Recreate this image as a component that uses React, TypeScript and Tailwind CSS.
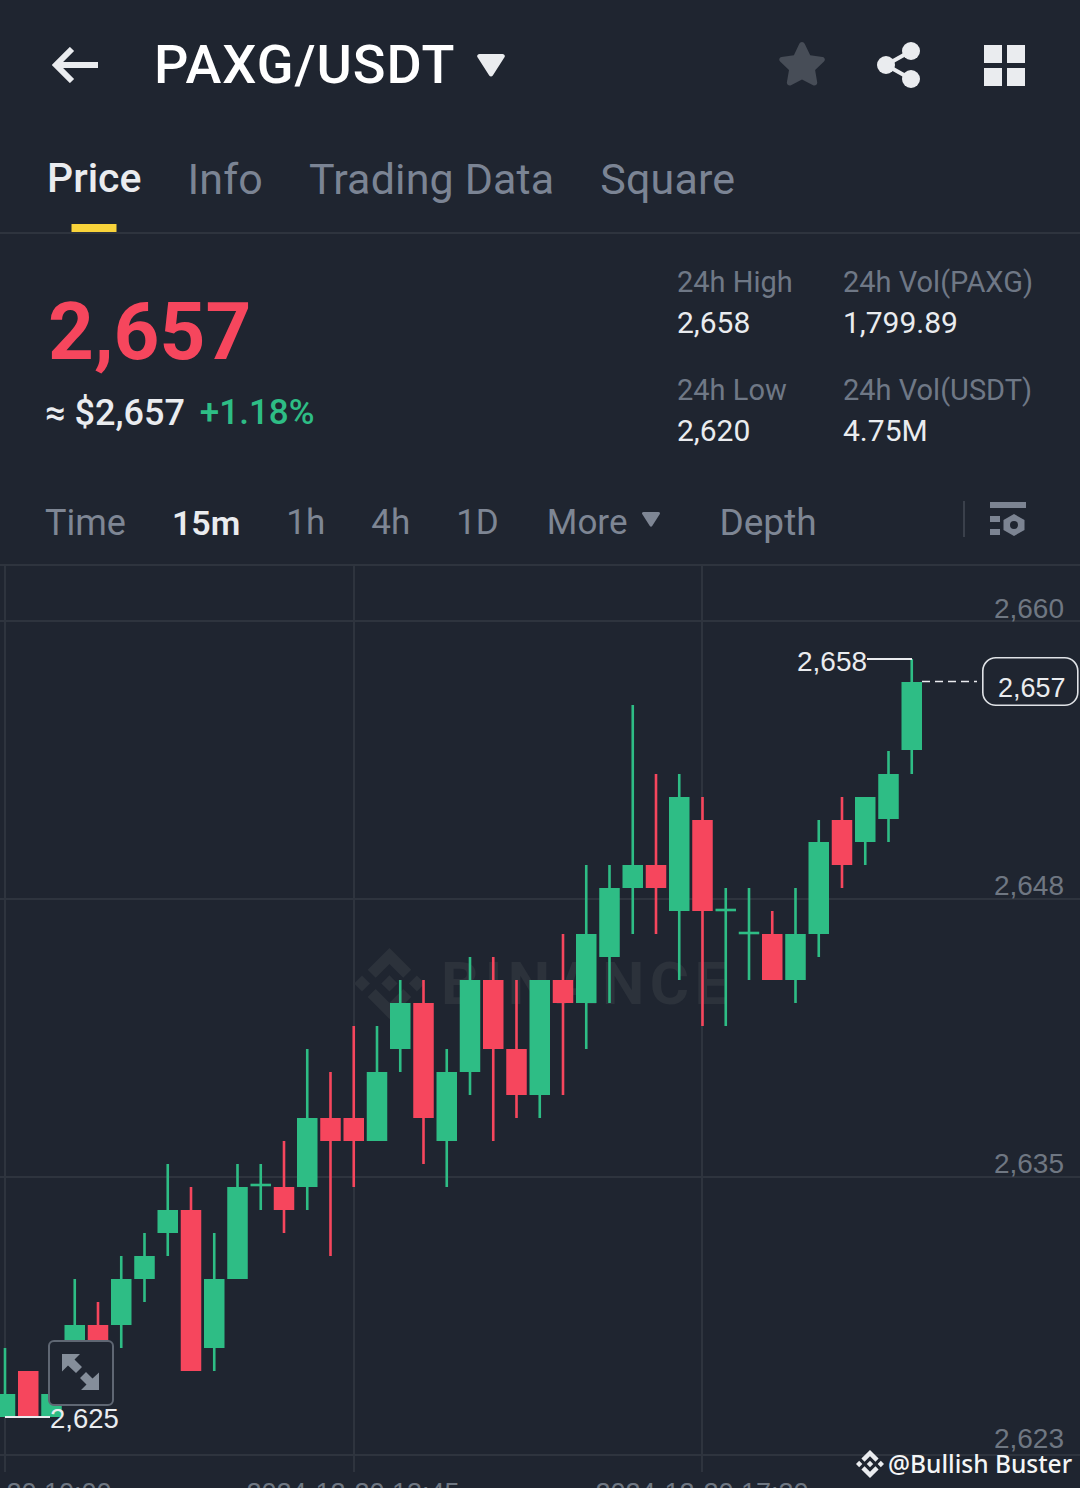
type Candle = [high: number, low: number, top: number, bottom: number, up: boolean];

const GREEN = '#2ebd85';
const RED = '#f6465d';

// y pixels, first candle sits at x=5, one every 23.25px
const CANDLES: Candle[] = [
  [1348, 1417, 1394, 1417, true],
  [1371, 1417, 1371, 1417, false],
  [1394, 1417, 1394, 1417, true],
  [1279, 1348, 1325, 1348, true],
  [1302, 1348, 1325, 1348, false],
  [1256, 1348, 1279, 1325, true],
  [1233, 1302, 1256, 1279, true],
  [1164, 1256, 1210, 1233, true],
  [1187, 1371, 1210, 1371, false],
  [1233, 1371, 1279, 1348, true],
  [1164, 1279, 1187, 1279, true],
  [1164, 1210, 1185, 1185, true],
  [1141, 1233, 1187, 1210, false],
  [1049, 1210, 1118, 1187, true],
  [1072, 1256, 1118, 1141, false],
  [1026, 1187, 1118, 1141, false],
  [1026, 1141, 1072, 1141, true],
  [980, 1072, 1003, 1049, true],
  [980, 1164, 1003, 1118, false],
  [1049, 1187, 1072, 1141, true],
  [957, 1095, 980, 1072, true],
  [957, 1141, 980, 1049, false],
  [980, 1118, 1049, 1095, false],
  [980, 1118, 980, 1095, true],
  [934, 1095, 980, 1003, false],
  [865, 1049, 934, 1003, true],
  [865, 1003, 888, 957, true],
  [705, 934, 865, 888, true],
  [774, 934, 865, 888, false],
  [774, 980, 797, 911, true],
  [797, 1026, 820, 911, false],
  [888, 1026, 910, 910, true],
  [888, 980, 933, 933, true],
  [911, 980, 934, 980, false],
  [888, 1003, 934, 980, true],
  [820, 957, 842, 934, true],
  [797, 888, 820, 865, false],
  [797, 865, 797, 842, true],
  [751, 842, 774, 819, true],
  [659, 774, 682, 750, true],
];

const MarkShapes = () => (
  <>
    <polygon points="38.73 53.2 63.3 28.63 87.89 53.22 102.19 38.92 63.3 0 24.42 38.9" />
    <polygon points="0 63.31 14.3 49 28.6 63.31 14.3 77.61" />
    <polygon points="38.73 73.41 63.3 97.98 87.89 73.39 102.19 87.68 63.3 126.61 24.42 87.72" />
    <polygon points="98 63.31 112.3 49 126.61 63.3 112.3 77.61" />
    <polygon points="77.83 63.3 63.3 48.73 48.74 63.29 63.3 77.88" />
  </>
);

const Caret = ({ className }: { className: string }) => (
  <svg viewBox="0 0 28 23" className={className} fill="currentColor">
    <path d="M2.5 0h23c2 0 3 2 1.800 3.600L15.800 21.600c-.9 1.200-2.700 1.200-3.600 0L.7 3.600C-.5 2 .5 0 2.500 0z" />
  </svg>
);

const Stat = ({ label, value }: { label: string; value: string }) => (
  <div className="flex flex-col whitespace-nowrap">
    <span className="h-10 text-[29px] leading-10 text-[#6f7886]">{label}</span>
    <span className="mt-px h-10 text-[30px] leading-10 text-[#eaecef]">{value}</span>
  </div>
);

const Chart = () => (
  <div className="relative min-h-0 flex-1 overflow-hidden">
    <svg viewBox="0 566 1080 922" className="h-full w-full font-['Liberation_Sans',sans-serif] text-[28px]">
      {[621, 899, 1177, 1455].map((y) => (
        <rect key={y} x={0} y={y - 1} width={1080} height={2} fill="#2e343e" />
      ))}
      {[5, 354, 702].map((x) => (
        <rect key={x} x={x - 1} y={566} width={2} height={906} fill="#2e343e" />
      ))}

      <g transform="translate(354 948) scale(0.56)" fill="#2c323b">
        <MarkShapes />
      </g>
      <text x={441} y={1004} className="fill-[#2c323b] font-['Roboto',sans-serif] text-[60px] font-bold tracking-[5.500px]">
        BINANCE
      </text>

      {CANDLES.map(([high, low, top, bottom, up], i) => {
        const cx = 5 + i * 23.25;
        const color = up ? GREEN : RED;
        return (
          <g key={i} fill={color}>
            <rect x={cx - 1.3} y={high} width={2.6} height={low - high} />
            {top === bottom ? (
              <rect x={cx - 10.25} y={top - 1.3} width={20.5} height={2.6} />
            ) : (
              <rect x={cx - 10.25} y={top} width={20.5} height={Math.abs(bottom - top)} />
            )}
          </g>
        );
      })}

      <text x={1064} y={618} textAnchor="end" className="fill-[#6f7782]">2,660</text>
      <text x={1064} y={895} textAnchor="end" className="fill-[#6f7782]">2,648</text>
      <text x={1064} y={1173} textAnchor="end" className="fill-[#6f7782]">2,635</text>
      <text x={1064} y={1448} textAnchor="end" className="fill-[#6f7782]">2,623</text>

      <text x={5} y={1502} textAnchor="middle" className="fill-[#6f7782] text-[27px]">2024-12-20 10:00</text>
      <text x={353} y={1502} textAnchor="middle" className="fill-[#6f7782] text-[27px]">2024-12-20 13:45</text>
      <text x={702} y={1502} textAnchor="middle" className="fill-[#6f7782] text-[27px]">2024-12-20 17:30</text>

      <text x={797} y={671} className="fill-[#eaecef]">2,658</text>
      <rect x={867} y={658} width={45} height={2} fill="#eaecef" />
      <text x={50} y={1428} className="fill-[#eaecef] text-[27.500px]">2,625</text>
      <rect x={5} y={1416} width={45} height={2} fill="#eaecef" />

      <line x1={922} y1={681.5} x2={977} y2={681.5} stroke="#eaecef" strokeWidth={1.6} strokeDasharray="8 5" />
      <rect x={982.8} y={657.8} width={95} height={47.5} rx={13} fill="#1f2530" stroke="#dfe2e6" strokeWidth={1.6} />
      <text x={998} y={697} className="fill-[#eaecef] text-[27px]">2,657</text>
    </svg>

    {/* fullscreen toggle sits over the candles */}
    <button
      type="button"
      aria-label="Fullscreen"
      className="absolute left-12 top-[774px] flex h-[66px] w-[66px] items-center justify-center rounded-md border-2 border-[#5f6773] bg-[#1f2530]"
    >
      <svg viewBox="0 0 38 38" className="h-[38px] w-[38px]" fill="#858e9a">
        <polygon points="0,0 18,0 12.5,5.5 20,13 14,19 6,11.5 0,17.5" />
        <polygon points="37,36 19,36 24.5,30.5 18,24 24,18 30.5,24.5 37,18.5" />
      </svg>
    </button>

    {/* post handle stamped on the image */}
    <div className="absolute right-2 top-[884px] flex items-center gap-1 font-['Noto_Sans',sans-serif] text-[24.500px] font-medium leading-7 text-[#f4f5f6]">
      <svg viewBox="0 0 126.61 126.61" className="h-7 w-7 text-[#eaecef]" fill="currentColor">
        <MarkShapes />
      </svg>
      <span>@Bullish Buster</span>
    </div>
  </div>
);

export default function App() {
  return (
    <div className="flex h-[1488px] w-[1080px] flex-col overflow-hidden bg-[#1f2530] font-['Roboto',sans-serif]">
      <header className="flex h-[130px] shrink-0 items-center pl-[52px] pr-[55px]">
        <svg viewBox="0 0 46 36" className="h-9 w-[46px]" fill="none" stroke="#eaecef" strokeWidth={6}>
          <path d="M46 18H4" />
          <path d="M20 2L4 18l16 16" />
        </svg>
        <h1 className="ml-14 text-[54px] font-medium leading-none tracking-[1px] text-white">PAXG/USDT</h1>
        <Caret className="ml-[22px] h-[23px] w-7 text-[#eaecef]" />
        <div className="ml-auto flex items-center">
          <svg viewBox="0 0 46 46" className="h-[46px] w-[46px]" fill="#474d57">
            <path d="M23 0c1.200 0 2.200.8 2.800 2l5.400 11.200 12.300 1.700c2.300.3 3.200 3 1.500 4.600l-8.900 8.600 2.100 12.200c.4 2.300-2 4-4.100 3L23 37.500 12 43.300c-2 1-4.500-.7-4.100-3l2.100-12.200-8.900-8.600C-.6 17.900.3 15.200 2.600 14.900l12.300-1.700L20.200 2C20.800.8 21.800 0 23 0z" />
          </svg>
          <svg viewBox="0 0 44 46" className="ml-[52px] h-[46px] w-11" fill="#eaecef">
            <circle cx="34" cy="9" r="9" />
            <circle cx="9" cy="23" r="9" />
            <circle cx="34" cy="37" r="9" />
            <path d="M9 23L34 9M9 23l25 14" stroke="#eaecef" strokeWidth="4" />
          </svg>
          <div className="ml-[63px] grid grid-cols-[18px_18px] grid-rows-[18px_18px] gap-[5px]">
            <span className="bg-[#eaecef]" />
            <span className="bg-[#eaecef]" />
            <span className="bg-[#eaecef]" />
            <span className="bg-[#eaecef]" />
          </div>
        </div>
      </header>

      <nav className="flex h-[104px] shrink-0 items-center gap-[46px] border-b-2 border-[#2e343e] px-[47px] pb-1 text-[43px] tracking-[0.150px] text-[#7b8494]">
        <span className="relative text-[41px] font-medium tracking-normal text-[#eaecef]">
          Price
          <span className="absolute bottom-[-22px] left-1/2 h-2 w-[45px] -translate-x-1/2 bg-[#f8d33a]" />
        </span>
        <span>Info</span>
        <span>Trading Data</span>
        <span>Square</span>
      </nav>

      <section className="flex h-[254px] shrink-0 justify-between pr-[47px]">
        <div className="pl-[48px] pt-[58px]">
          <div className="text-[80px] font-bold leading-20 text-[#f6465d]">2,657</div>
          <div className="-ml-[3px] mt-[21px] flex items-center text-[36px] font-medium leading-10">
            <span className="text-[#eaecef]">≈ $2,657</span>
            <span className="ml-[15px] text-[35px] text-[#2ebd85]">+1.18%</span>
          </div>
        </div>
        <div className="grid grid-cols-[166px_190px] gap-y-[27px] self-start pt-7">
          <Stat label="24h High" value="2,658" />
          <Stat label="24h Vol(PAXG)" value="1,799.89" />
          <Stat label="24h Low" value="2,620" />
          <Stat label="24h Vol(USDT)" value="4.75M" />
        </div>
      </section>

      <div className="flex h-[78px] shrink-0 items-center border-b-2 border-[#2e343e] pb-[7px] pl-[45px] pr-[54px] text-[35px] leading-10 text-[#7e8694]">
        <div className="flex items-center gap-[46px]">
          <span className="text-[36px]">Time</span>
          <span className="text-[34px] font-semibold text-[#eaecef]">15m</span>
          <span>1h</span>
          <span>4h</span>
          <span>1D</span>
          <span className="ml-0.5 flex items-center gap-[14px]">
            More
            <Caret className="mb-[6px] h-[15px] w-5" />
          </span>
        </div>
        <span className="ml-[58px] text-[37px]">Depth</span>
        <span className="mb-2 ml-auto h-9 w-0.5 bg-[#3a404b]" />
        <svg viewBox="0 0 36 34" className="mb-2 ml-[25px] h-[34px] w-9" fill="#7c8492">
          <rect x="0" y="0" width="36" height="6" />
          <rect x="0" y="14" width="10" height="6" />
          <rect x="0" y="27" width="10" height="6" />
          <path fillRule="evenodd" d="M24 12l10.500 6v10L24 34l-10.500-6V18zM24 19a4 4 0 100 8 4 4 0 000-8z" />
        </svg>
      </div>

      <Chart />
    </div>
  );
}
